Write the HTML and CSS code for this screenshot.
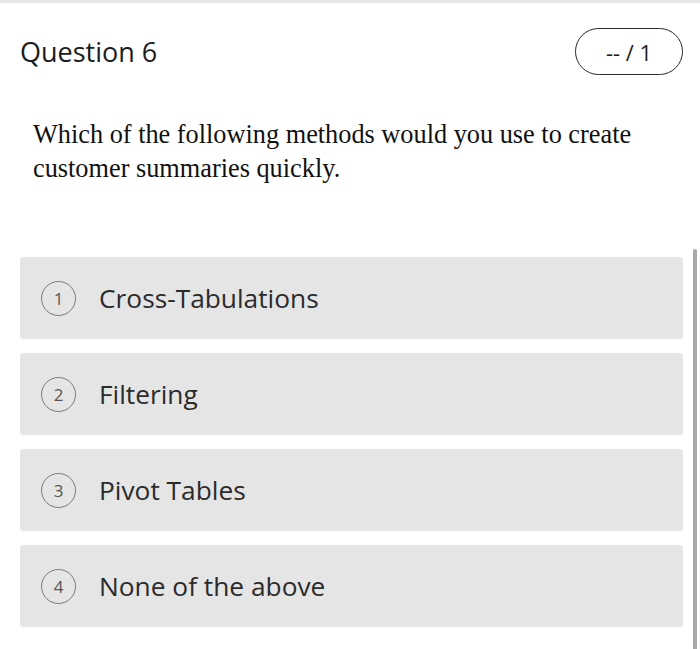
FILE: index.html
```html
<!DOCTYPE html>
<html>
<head>
<meta charset="utf-8">
<link rel="stylesheet" href="styles.css">
</head>
<body>
<div class="topline"></div>
<div class="page">
  <div class="header">
    <h2 class="title">Question 6</h2>
    <div class="score">-- / 1</div>
  </div>
  <p class="question">Which of the following methods would you use to create customer summaries quickly.</p>
  <div class="options">
    <div class="option"><span class="num">1</span><span class="label">Cross-Tabulations</span></div>
    <div class="option"><span class="num">2</span><span class="label">Filtering</span></div>
    <div class="option"><span class="num">3</span><span class="label">Pivot Tables</span></div>
    <div class="option"><span class="num">4</span><span class="label">None of the above</span></div>
  </div>
</div>
<div class="scrollbar"></div>
</body>
</html>
```

FILE: styles.css
```css
html, body {
  margin: 0;
  padding: 0;
  background: #ffffff;
  overflow: hidden;
}
body {
  height: 649px;
  font-family: "Open Sans", "Liberation Sans", sans-serif;
  position: relative;
}
.topline {
  height: 3px;
  background: #e6e6e6;
}
.page {
  padding: 0 17px 0 20px;
}
.header {
  display: flex;
  align-items: center;
  justify-content: space-between;
  margin-top: 25px;
  height: 47px;
}
.title {
  margin: 0;
  font-size: 27px;
  font-weight: 500;
  color: #1c1c1c;
}
.score {
  box-sizing: border-box;
  width: 108px;
  height: 47px;
  border: 1.5px solid #2a2a2a;
  border-radius: 24px;
  display: flex;
  align-items: center;
  justify-content: center;
  font-size: 22px;
  color: #222222;
}
.question {
  margin: 43px 0 0 13px;
  font-family: "Liberation Serif", "Times New Roman", serif;
  font-size: 26.3px;
  line-height: 34px;
  color: #111111;
  max-width: 640px;
}
.options {
  margin-top: 71px;
  display: flex;
  flex-direction: column;
  gap: 14px;
}
.option {
  height: 82px;
  background: #e5e5e5;
  border-radius: 3px;
  display: flex;
  align-items: center;
  padding-left: 21px;
}
.num {
  box-sizing: border-box;
  width: 35px;
  height: 35px;
  border: 1.5px solid #7a7a7a;
  border-radius: 50%;
  display: flex;
  align-items: center;
  justify-content: center;
  font-size: 17px;
  color: #555555;
  flex-shrink: 0;
}
.label {
  margin-left: 23px;
  font-size: 26.3px;
  color: #2b2b2b;
}
.scrollbar {
  position: absolute;
  right: 3px;
  top: 249px;
  bottom: 0;
  width: 4px;
  background: #a9a9a9;
  border-radius: 2px 2px 0 0;
}
```
